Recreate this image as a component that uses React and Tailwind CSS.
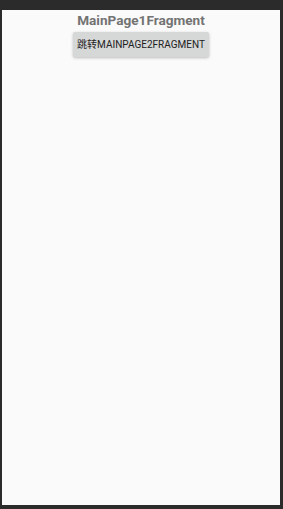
export default function App() {
  return (
    <div className="w-[283px] h-[509px] bg-[#2b2b2b] pt-[10px] pl-[2px] pr-[3px] pb-[4px]" style={{ fontFamily: 'Roboto, "Noto Sans CJK SC", sans-serif' }}>
      <div className="h-full bg-[#fafafa] flex flex-col items-center">
        <div className="mt-[1px] text-[13.6px] leading-[18px] font-bold text-[#737373]">MainPage1Fragment</div>
        <button className="mt-[3px] w-[136px] h-[25px] bg-[#d6d7d7] rounded-[2px] shadow-[0_1px_3px_rgba(0,0,0,0.25)] text-[10px] text-[#222] font-normal flex items-center justify-center whitespace-nowrap">
          跳转MAINPAGE2FRAGMENT
        </button>
      </div>
    </div>
  );
}
